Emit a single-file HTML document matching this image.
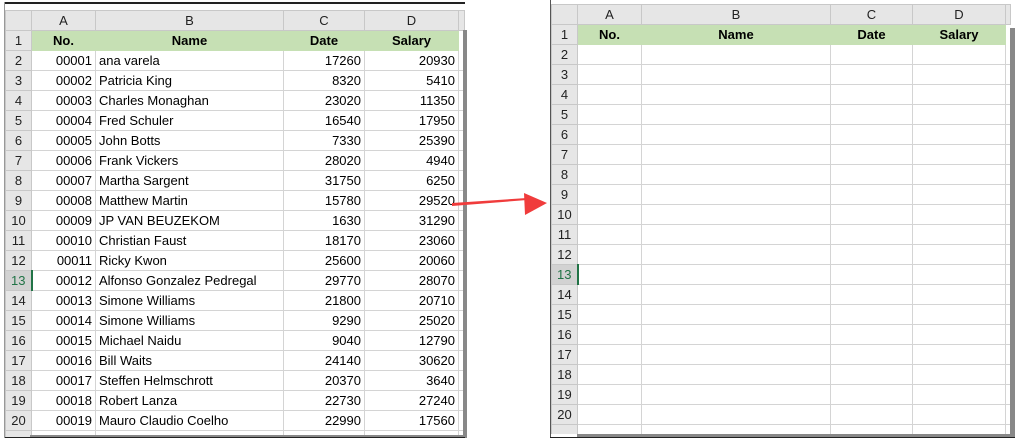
<!DOCTYPE html>
<html><head><style>
body{margin:0;width:1020px;height:443px;background:#fff;position:relative;overflow:hidden;font-family:"Liberation Sans",sans-serif;}
.sheet{position:absolute;background:#fff;border-top:2px solid #222;overflow:hidden;}
.sheet table{border-collapse:collapse;table-layout:fixed;font-size:13px;color:#000;}
.sheet td{height:19px;border:1px solid #d4d4d4;padding:0 3px;white-space:nowrap;overflow:hidden;line-height:19px;}
.sheet tr.hd td{background:#e6e6e6;text-align:center;border-color:#c8c8c8;color:#222;}
.sheet td.rh{background:#e6e6e6;text-align:center;border-color:#c8c8c8;color:#222;padding:0;}
.sheet td.sel{background:#d2d2d2;color:#217346;border-right:2px solid #217346;}
.sheet tr.g td{background:#c6e0b4;font-weight:bold;text-align:center;border-color:#c6e0b4;}
.sheet tr.g td.rh{background:#e6e6e6;font-weight:normal;border-color:#c8c8c8;}
.r{text-align:right;}
.shadow{position:absolute;background:#888;}
</style></head><body>

<div class="sheet" style="left:5px;top:2px;width:460px;height:433px;">
<table style="margin-top:6px;width:459px">
<colgroup><col style="width:26px"><col style="width:64px"><col style="width:188px"><col style="width:81px"><col style="width:94px"><col style="width:6px"></colgroup>
<tr class="hd"><td class="rh" style="background:#e6e6e6"></td><td>A</td><td>B</td><td>C</td><td>D</td><td></td></tr>
<tr class="g"><td class="rh">1</td><td>No.</td><td>Name</td><td>Date</td><td>Salary</td><td style="background:#fff;border-color:#fff"></td></tr>
<tr><td class="rh">2</td><td class="r">00001</td><td>ana varela</td><td class="r">17260</td><td class="r">20930</td><td></td></tr>
<tr><td class="rh">3</td><td class="r">00002</td><td>Patricia King</td><td class="r">8320</td><td class="r">5410</td><td></td></tr>
<tr><td class="rh">4</td><td class="r">00003</td><td>Charles Monaghan</td><td class="r">23020</td><td class="r">11350</td><td></td></tr>
<tr><td class="rh">5</td><td class="r">00004</td><td>Fred Schuler</td><td class="r">16540</td><td class="r">17950</td><td></td></tr>
<tr><td class="rh">6</td><td class="r">00005</td><td>John Botts</td><td class="r">7330</td><td class="r">25390</td><td></td></tr>
<tr><td class="rh">7</td><td class="r">00006</td><td>Frank Vickers</td><td class="r">28020</td><td class="r">4940</td><td></td></tr>
<tr><td class="rh">8</td><td class="r">00007</td><td>Martha Sargent</td><td class="r">31750</td><td class="r">6250</td><td></td></tr>
<tr><td class="rh">9</td><td class="r">00008</td><td>Matthew Martin</td><td class="r">15780</td><td class="r">29520</td><td></td></tr>
<tr><td class="rh">10</td><td class="r">00009</td><td>JP VAN BEUZEKOM</td><td class="r">1630</td><td class="r">31290</td><td></td></tr>
<tr><td class="rh">11</td><td class="r">00010</td><td>Christian Faust</td><td class="r">18170</td><td class="r">23060</td><td></td></tr>
<tr><td class="rh">12</td><td class="r">00011</td><td>Ricky Kwon</td><td class="r">25600</td><td class="r">20060</td><td></td></tr>
<tr><td class="rh sel">13</td><td class="r">00012</td><td>Alfonso Gonzalez Pedregal</td><td class="r">29770</td><td class="r">28070</td><td></td></tr>
<tr><td class="rh">14</td><td class="r">00013</td><td>Simone Williams</td><td class="r">21800</td><td class="r">20710</td><td></td></tr>
<tr><td class="rh">15</td><td class="r">00014</td><td>Simone Williams</td><td class="r">9290</td><td class="r">25020</td><td></td></tr>
<tr><td class="rh">16</td><td class="r">00015</td><td>Michael Naidu</td><td class="r">9040</td><td class="r">12790</td><td></td></tr>
<tr><td class="rh">17</td><td class="r">00016</td><td>Bill Waits</td><td class="r">24140</td><td class="r">30620</td><td></td></tr>
<tr><td class="rh">18</td><td class="r">00017</td><td>Steffen Helmschrott</td><td class="r">20370</td><td class="r">3640</td><td></td></tr>
<tr><td class="rh">19</td><td class="r">00018</td><td>Robert Lanza</td><td class="r">22730</td><td class="r">27240</td><td></td></tr>
<tr><td class="rh">20</td><td class="r">00019</td><td>Mauro Claudio Coelho</td><td class="r">22990</td><td class="r">17560</td><td></td></tr>
<tr><td class="rh"></td><td></td><td></td><td></td><td></td><td></td></tr>
</table>
</div>
<div class="shadow" style="left:463px;top:30px;width:4px;height:408px"></div>
<div class="shadow" style="left:30px;top:435px;width:437px;height:3px"></div>
<div style="position:absolute;left:4px;top:2px;width:1px;height:436px;background:#999"></div>

<div class="sheet" style="left:551px;top:0px;width:460px;height:434px;border-top:none">
<table style="margin-top:4px;width:459px">
<colgroup><col style="width:26px"><col style="width:64px"><col style="width:189px"><col style="width:82px"><col style="width:93px"><col style="width:5px"></colgroup>
<tr class="hd"><td class="rh"></td><td>A</td><td>B</td><td>C</td><td>D</td><td></td></tr>
<tr class="g"><td class="rh">1</td><td>No.</td><td>Name</td><td>Date</td><td>Salary</td><td style="background:#fff;border-color:#fff"></td></tr>
<tr><td class="rh">2</td><td></td><td></td><td></td><td></td><td></td></tr>
<tr><td class="rh">3</td><td></td><td></td><td></td><td></td><td></td></tr>
<tr><td class="rh">4</td><td></td><td></td><td></td><td></td><td></td></tr>
<tr><td class="rh">5</td><td></td><td></td><td></td><td></td><td></td></tr>
<tr><td class="rh">6</td><td></td><td></td><td></td><td></td><td></td></tr>
<tr><td class="rh">7</td><td></td><td></td><td></td><td></td><td></td></tr>
<tr><td class="rh">8</td><td></td><td></td><td></td><td></td><td></td></tr>
<tr><td class="rh">9</td><td></td><td></td><td></td><td></td><td></td></tr>
<tr><td class="rh">10</td><td></td><td></td><td></td><td></td><td></td></tr>
<tr><td class="rh">11</td><td></td><td></td><td></td><td></td><td></td></tr>
<tr><td class="rh">12</td><td></td><td></td><td></td><td></td><td></td></tr>
<tr><td class="rh sel">13</td><td></td><td></td><td></td><td></td><td></td></tr>
<tr><td class="rh">14</td><td></td><td></td><td></td><td></td><td></td></tr>
<tr><td class="rh">15</td><td></td><td></td><td></td><td></td><td></td></tr>
<tr><td class="rh">16</td><td></td><td></td><td></td><td></td><td></td></tr>
<tr><td class="rh">17</td><td></td><td></td><td></td><td></td><td></td></tr>
<tr><td class="rh">18</td><td></td><td></td><td></td><td></td><td></td></tr>
<tr><td class="rh">19</td><td></td><td></td><td></td><td></td><td></td></tr>
<tr><td class="rh">20</td><td></td><td></td><td></td><td></td><td></td></tr>
<tr><td class="rh"></td><td></td><td></td><td></td><td></td><td></td></tr>
</table>
</div>
<div style="position:absolute;left:550px;top:0px;width:1px;height:438px;background:#555"></div>
<div class="shadow" style="left:1010px;top:28px;width:5px;height:410px"></div>
<div class="shadow" style="left:577px;top:434px;width:438px;height:3px"></div>
<div style="position:absolute;left:550px;top:437px;width:465px;height:1px;background:#222"></div>
<div style="position:absolute;left:5px;top:437px;width:460px;height:1px;background:#222"></div>

<svg style="position:absolute;left:0;top:0" width="1020" height="443">
<polygon points="452,203 527,198 527,200 452,206" fill="#f03c3c"/>
<polygon points="524,193 547,203 525,215" fill="#f03c3c"/>
</svg>
</body></html>
